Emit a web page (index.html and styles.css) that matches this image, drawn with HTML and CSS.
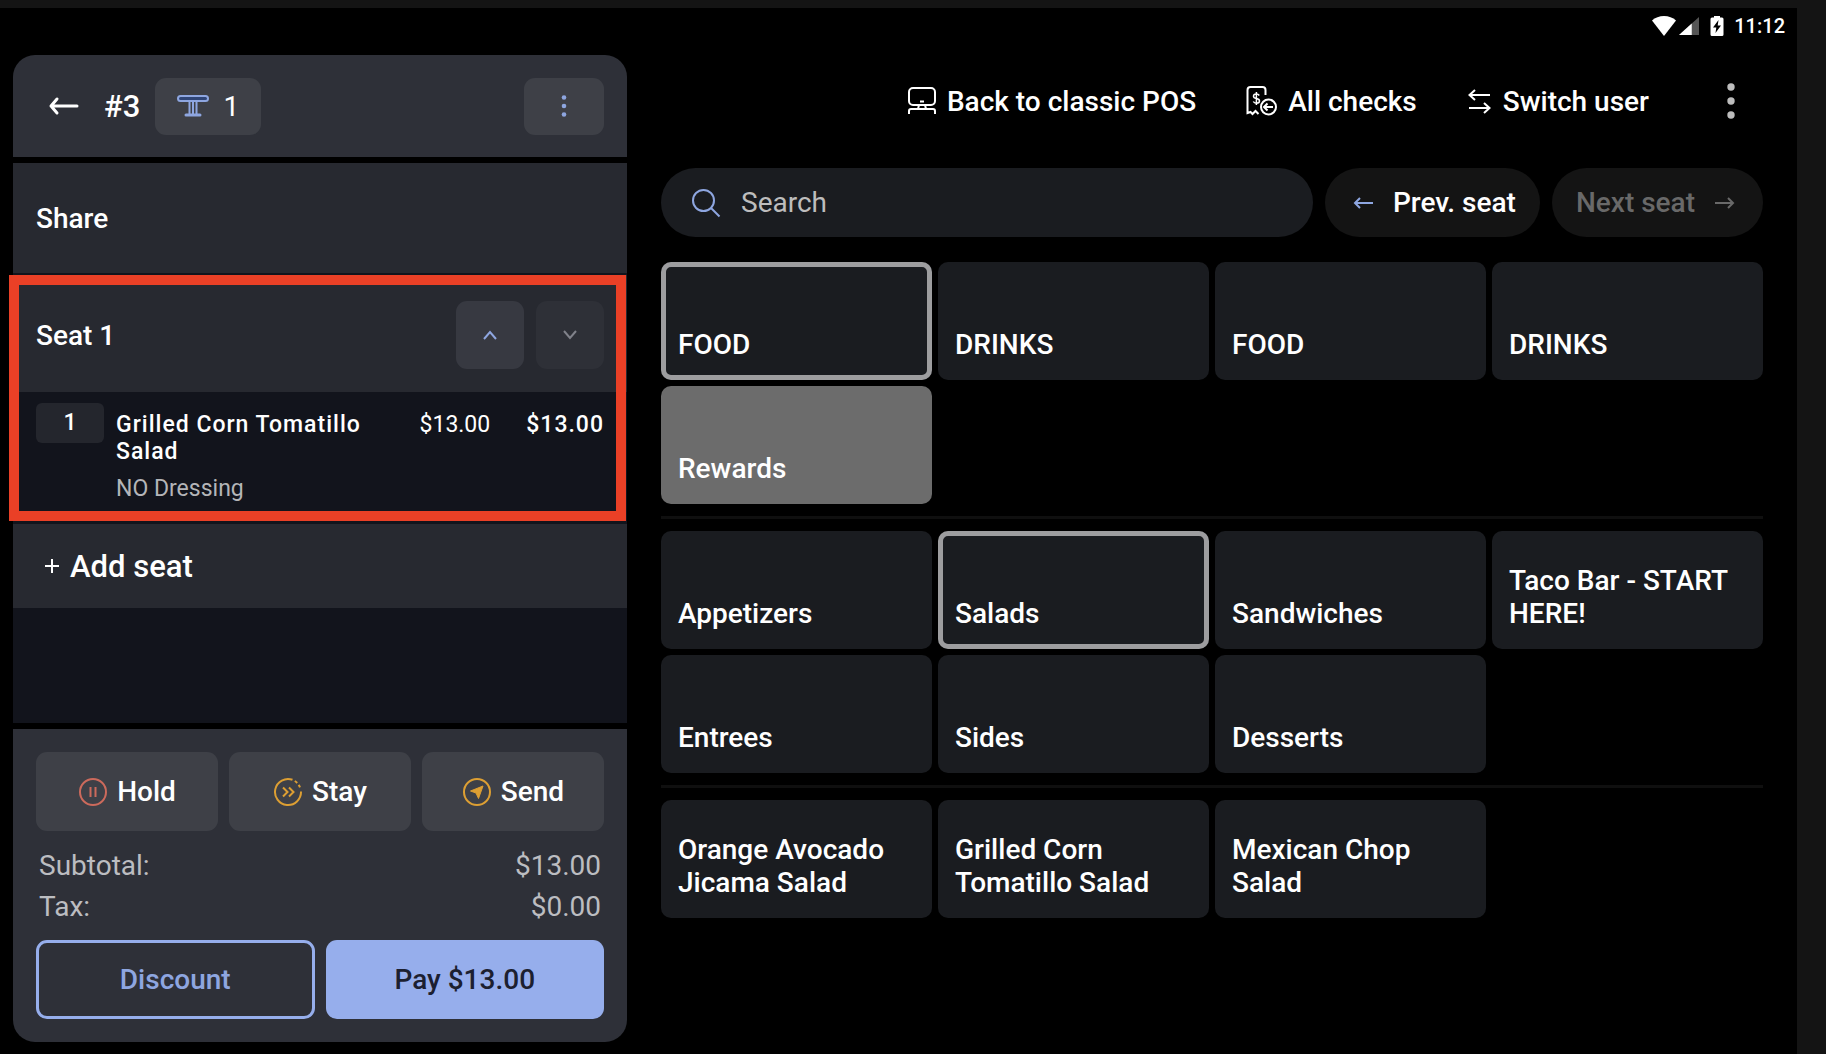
FILE: index.html
```html
<!DOCTYPE html>
<html lang="en">
<head>
    <meta charset="UTF-8">
    <meta name="viewport" content="width=device-width, initial-scale=1.0">
    <title>POS - Check #3</title>
    <link rel="stylesheet" href="styles.css">
</head>
<body>
    <div class="app">
        <header class="status-bar">
            <svg class="wifi" width="26" height="20" viewBox="0 0 26 20" fill="#fff"><path d="M1 4.500C7-1.500 19-1.500 25 4.500L13 20z"/></svg>
            <svg class="signal" width="20" height="20" viewBox="0 0 22 20"><path d="M22 0v20H0z" fill="#555"/><path d="M14 7.300V20H0z" fill="#fff"/></svg>
            <svg class="battery" width="14" height="20" viewBox="0 0 14 20"><path d="M4 0h6v1.500h2Q13.500 1.500 13.500 3v15.500q0 1.500-1.500 1.500h-10Q.5 20 .5 18.500V3Q.5 1.500 2 1.500H4z" fill="#fff"/><path d="M8.500 4L3 11.500h3.300L5.500 17 11 9.500H7.700z" fill="#000"/></svg>
            <span class="clock">11:12</span>
        </header>

        <main class="main">
            <section class="check">
                <div class="check-header">
                    <button class="back" aria-label="Back">
                        <svg width="32" height="24" viewBox="0 0 32 24" fill="none" stroke="#fff" stroke-width="3" stroke-linecap="round" stroke-linejoin="round"><path d="M29 12H3M9 5L3 12l6 7"/></svg>
                    </button>
                    <h1>#3</h1>
                    <button class="soft table-btn">
                        <svg width="32" height="22" viewBox="0 0 32 22" fill="none" stroke="#8ea6e0" stroke-width="2"><rect x="1" y="1" width="30" height="5" rx="2.500" fill="#2f4577"/><path d="M12.500 6v13M16 6v13M19.500 6v13"/><path d="M9 20h14" stroke-width="3" stroke-linecap="round"/></svg>
                        1
                    </button>
                    <button class="soft more" aria-label="Check options">
                        <svg width="6" height="24" viewBox="0 0 6 24" fill="#8ea6e0"><circle cx="3" cy="3.500" r="2.300"/><circle cx="3" cy="12" r="2.300"/><circle cx="3" cy="20.500" r="2.300"/></svg>
                    </button>
                </div>

                <div class="check-body">
                    <div class="share">Share</div>

                    <div class="seat selected">
                        <div class="seat-header">
                            <h2>Seat 1</h2>
                            <button class="step" aria-label="Previous seat">
                                <svg width="16" height="10" viewBox="0 0 16 10" fill="none" stroke="#8ea6e0" stroke-width="2"><path d="M2 9l6-7 6 7"/></svg>
                            </button>
                            <button class="step" aria-label="Next seat" disabled>
                                <svg width="16" height="10" viewBox="0 0 16 10" fill="none" stroke="#80828a" stroke-width="2"><path d="M2 1l6 7 6-7"/></svg>
                            </button>
                        </div>
                        <div class="item">
                            <span class="qty">1</span>
                            <div class="item-name">
                                <p>Grilled Corn Tomatillo Salad</p>
                                <p class="modifier">NO Dressing</p>
                            </div>
                            <span class="unit-price">$13.00</span>
                            <span class="item-total">$13.00</span>
                        </div>
                    </div>

                    <button class="add-seat">
                        <svg width="16" height="16" viewBox="0 0 16 16" stroke="#fff" stroke-width="2"><path d="M8 1v14M1 8h14"/></svg>
                        Add seat
                    </button>
                </div>

                <div class="check-footer">
                    <div class="actions">
                        <button class="soft">
                            <svg width="30" height="30" viewBox="0 0 30 30" fill="none" stroke="#cc6a5c" stroke-width="2"><circle cx="15" cy="15" r="13"/><path d="M12.500 10v10M17.500 10v10"/></svg>
                            Hold
                        </button>
                        <button class="soft">
                            <svg width="30" height="30" viewBox="0 0 30 30" fill="none" stroke="#dd9f33" stroke-width="2"><path d="M19.500 2.800A13 13 0 1 0 28 14.500M21.800 4a13 13 0 0 1 2.400 2M25.600 7.800a13 13 0 0 1 1.400 2.500"/><path d="M10 10.500l4.500 4.500-4.500 4.500M16 10.500l4.500 4.500-4.500 4.500"/></svg>
                            Stay
                        </button>
                        <button class="soft">
                            <svg width="30" height="30" viewBox="0 0 30 30" fill="none" stroke="#dd9f33" stroke-width="2"><circle cx="15" cy="15" r="13"/><path d="M21 9L8.500 14l5.500 2 2.500 5.500z" fill="#dd9f33" stroke-width="1" stroke-linejoin="round"/></svg>
                            Send
                        </button>
                    </div>
                    <dl class="totals">
                        <div><dt>Subtotal:</dt><dd>$13.00</dd></div>
                        <div><dt>Tax:</dt><dd>$0.00</dd></div>
                    </dl>
                    <div class="actions">
                        <button class="discount">Discount</button>
                        <button class="pay">Pay $13.00</button>
                    </div>
                </div>
            </section>

            <section class="catalog">
                <nav class="top-nav">
                    <a href="#">
                        <svg width="30" height="30" viewBox="0 0 30 30" fill="none" stroke="#fff" stroke-width="2"><rect x="2" y="2" width="26" height="17" rx="4"/><path d="M13 15.500h4M12 19l-1 4M18 19l1 4M2 28v-3q0-2 2-2h22q2 0 2 2v3"/></svg>
                        Back to classic POS
                    </a>
                    <a href="#">
                        <svg width="32" height="30" viewBox="0 0 32 30" fill="none" stroke="#fff" stroke-width="2"><path d="M19.500 9V4q0-3-3-3h-12q-3 0-3 3v23l3-1 2 2 3-3 3 3"/><path d="M13.300 9.500q-1-1.500-3-1.500-2.800 0-2.800 2.200 0 1.800 2.900 2.300 3.100.5 3.100 2.500 0 2.200-3 2.200-2.300 0-3.200-1.700M10.400 6v13" stroke-width="1.500"/><circle cx="22.500" cy="21" r="7.500"/><path d="M27 21h-8M21.500 17.500L18 21l3.500 3.500"/></svg>
                        All checks
                    </a>
                    <a href="#">
                        <svg width="26" height="28" viewBox="0 0 26 28" fill="none" stroke="#fff" stroke-width="2"><path d="M23 8H3M8 3L2.500 8 8 13"/><path d="M2 21h20M17 16l5.500 5-5.500 5"/></svg>
                        Switch user
                    </a>
                    <button class="menu" aria-label="Menu">
                        <svg width="8" height="36" viewBox="0 0 8 36" fill="#bdbdbd"><circle cx="4" cy="4" r="3.700"/><circle cx="4" cy="18" r="3.700"/><circle cx="4" cy="32" r="3.700"/></svg>
                    </button>
                </nav>

                <div class="search-row">
                    <label class="search">
                        <svg width="30" height="30" viewBox="0 0 30 30" fill="none" stroke="#8ea6e0" stroke-width="2"><circle cx="12.500" cy="12.500" r="10.500"/><path d="M20 20l8.500 8.500"/></svg>
                        <input type="text" placeholder="Search" aria-label="Search">
                    </label>
                    <button class="pill prev">
                        <svg width="20" height="12" viewBox="0 0 20 12" fill="none" stroke="#8ea6e0" stroke-width="2"><path d="M20 6H2M7 1L2 6l5 5"/></svg>
                        Prev. seat
                    </button>
                    <button class="pill next" disabled>
                        Next seat
                        <svg width="20" height="12" viewBox="0 0 20 12" fill="none" stroke="#696969" stroke-width="2"><path d="M0 6h18M13 1l5 5-5 5"/></svg>
                    </button>
                </div>

                <div class="tiles">
                    <button class="tile active">FOOD</button>
                    <button class="tile">DRINKS</button>
                    <button class="tile">FOOD</button>
                    <button class="tile">DRINKS</button>
                    <button class="tile rewards">Rewards</button>
                </div>
                <div class="tiles">
                    <button class="tile">Appetizers</button>
                    <button class="tile active">Salads</button>
                    <button class="tile">Sandwiches</button>
                    <button class="tile">Taco Bar - START HERE!</button>
                    <button class="tile">Entrees</button>
                    <button class="tile">Sides</button>
                    <button class="tile">Desserts</button>
                </div>
                <div class="tiles">
                    <button class="tile">Orange Avocado Jicama Salad</button>
                    <button class="tile">Grilled Corn Tomatillo Salad</button>
                    <button class="tile">Mexican Chop Salad</button>
                </div>
            </section>
        </main>
    </div>
</body>
</html>
```
FILE: styles.css
```css
* {
    box-sizing: border-box;
}
body {
    margin: 0;
    padding: 8px 29px 0 0;
    min-height: 100vh;
    display: flex;
    background-color: #141414;
    color: #fff;
    font-family: Roboto, sans-serif;
    font-size: 28px;
    font-weight: 500;
    line-height: 33px;
}
h1, h2, p, dl, dd {
    margin: 0;
    font-size: inherit;
    font-weight: inherit;
}
button, input {
    font: inherit;
    color: inherit;
    border: none;
    padding: 0;
    background: none;
}
button {
    display: flex;
    align-items: center;
    justify-content: center;
    cursor: pointer;
}
svg {
    flex-shrink: 0;
}
.app {
    flex: 1;
    display: flex;
    flex-direction: column;
    background-color: #000;
}
.status-bar {
    display: flex;
    align-items: center;
    justify-content: flex-end;
    height: 36px;
    padding-right: 12px;
    font-size: 20px;
}
.signal {
    margin: 0 11px 0 2px;
}
.clock {
    margin-left: 10px;
}
.main {
    flex: 1;
    display: grid;
    grid-template-columns: 614fr 1102fr;
    column-gap: 34px;
    padding: 11px 34px 12px 13px;
}

/* check panel */
.check {
    display: flex;
    flex-direction: column;
    gap: 6px;
}
.check-header {
    display: flex;
    align-items: center;
    height: 102px;
    padding: 0 23px;
    background-color: #2e3038;
    border-radius: 22px 22px 0 0;
}
.back {
    width: 56px;
}
.check-header h1 {
    margin: 0 15px 0 12px;
    font-size: 31px;
}
.soft {
    background-color: #3e4047;
    border-radius: 11px;
}
.table-btn {
    gap: 14px;
    width: 106px;
    height: 57px;
    font-weight: 400;
}
.more {
    width: 80px;
    height: 57px;
    margin-left: auto;
}
.check-body {
    flex: 1;
    background-color: #12141c;
}
.share {
    display: flex;
    align-items: center;
    height: 110px;
    padding: 0 23px;
    margin-bottom: 2px;
    background-color: #272930;
}
.seat {
    position: relative;
    padding-bottom: 3px;
}
/* highlight frame drawn over the seat */
.seat.selected::after {
    content: "";
    position: absolute;
    inset: 0 1px 3px -4px;
    border: 10px solid #ea4026;
    pointer-events: none;
}
.seat-header {
    display: flex;
    align-items: center;
    gap: 12px;
    padding: 26px 23px 23px;
    background-color: #272930;
}
.seat-header h2 {
    margin-right: auto;
}
.step {
    width: 68px;
    height: 68px;
    background-color: #373941;
    border-radius: 11px;
}
.step:disabled {
    background-color: #2e3037;
}
.item {
    display: grid;
    grid-template-columns: 68px 1fr auto auto;
    align-items: start;
    padding: 11px 23px 19px;
    font-size: 23px;
    line-height: 27px;
}
.qty {
    background-color: #24262d;
    border-radius: 6px;
    text-align: center;
    line-height: 40px;
}
.item-name {
    padding: 8px 36px 0 12px;
    letter-spacing: 1px;
}
.modifier {
    margin-top: 10px;
    color: #b4b5b8;
    font-weight: 400;
    letter-spacing: normal;
}
.unit-price {
    padding-top: 8px;
    font-weight: 400;
}
.item-total {
    padding: 8px 0 0 36px;
    letter-spacing: 1px;
}
.add-seat {
    justify-content: flex-start;
    gap: 10px;
    width: 100%;
    height: 84px;
    padding: 0 31px;
    background-color: #272930;
    font-size: 31px;
}
.check-footer {
    padding: 23px;
    background-color: #2e3038;
    border-radius: 0 0 22px 22px;
}
.actions {
    display: grid;
    grid-auto-flow: column;
    grid-auto-columns: 1fr;
    gap: 11px;
}
.actions button {
    gap: 9px;
    height: 79px;
    border-radius: 11px;
}
.totals {
    padding: 14px 3px 13px;
    color: #bcbdc1;
    font-weight: 400;
    line-height: 41px;
}
.totals div {
    display: flex;
    justify-content: space-between;
}
.actions .discount {
    border: 3px solid #96aeec;
    color: #8ea6e0;
}
.actions .pay {
    background-color: #96aeec;
    color: #1c2030;
}

/* menu side */
.top-nav {
    display: flex;
    align-items: center;
    justify-content: flex-end;
    gap: 50px;
    height: 92px;
    margin-bottom: 21px;
}
.top-nav a {
    display: flex;
    align-items: center;
    gap: 10px;
    color: #fff;
    text-decoration: none;
}
.menu {
    width: 64px;
    height: 64px;
}
.search-row {
    display: flex;
    gap: 12px;
    margin-bottom: 25px;
}
.search {
    flex: 1;
    display: flex;
    align-items: center;
    gap: 20px;
    height: 69px;
    padding: 0 30px;
    background-color: #1a1c20;
    border-radius: 35px;
}
.search input {
    flex: 1;
    min-width: 0;
    font-weight: 400;
    outline: none;
}
.search input::placeholder {
    color: #bdbdbd;
    opacity: 1;
}
.pill {
    gap: 20px;
    background-color: #141414;
    border-radius: 35px;
}
.prev {
    padding: 0 24px 0 28px;
}
.next {
    padding: 0 28px 0 24px;
}
.pill:disabled {
    color: #696969;
}
.tiles {
    display: grid;
    grid-template-columns: repeat(4, 1fr);
    gap: 6px;
}
.tiles + .tiles {
    margin-top: 12px;
    padding-top: 12px;
    border-top: 3px solid #0f0f0f;
}
.tile {
    align-items: flex-end;
    justify-content: flex-start;
    height: 118px;
    padding: 0 17px 19px;
    background-color: #1a1c20;
    border-radius: 10px;
    text-align: left;
}
.tile.active {
    box-shadow: inset 0 0 0 5px #9d9d9f;
}
.tile.rewards {
    background-color: #6c6c6c;
}
```
